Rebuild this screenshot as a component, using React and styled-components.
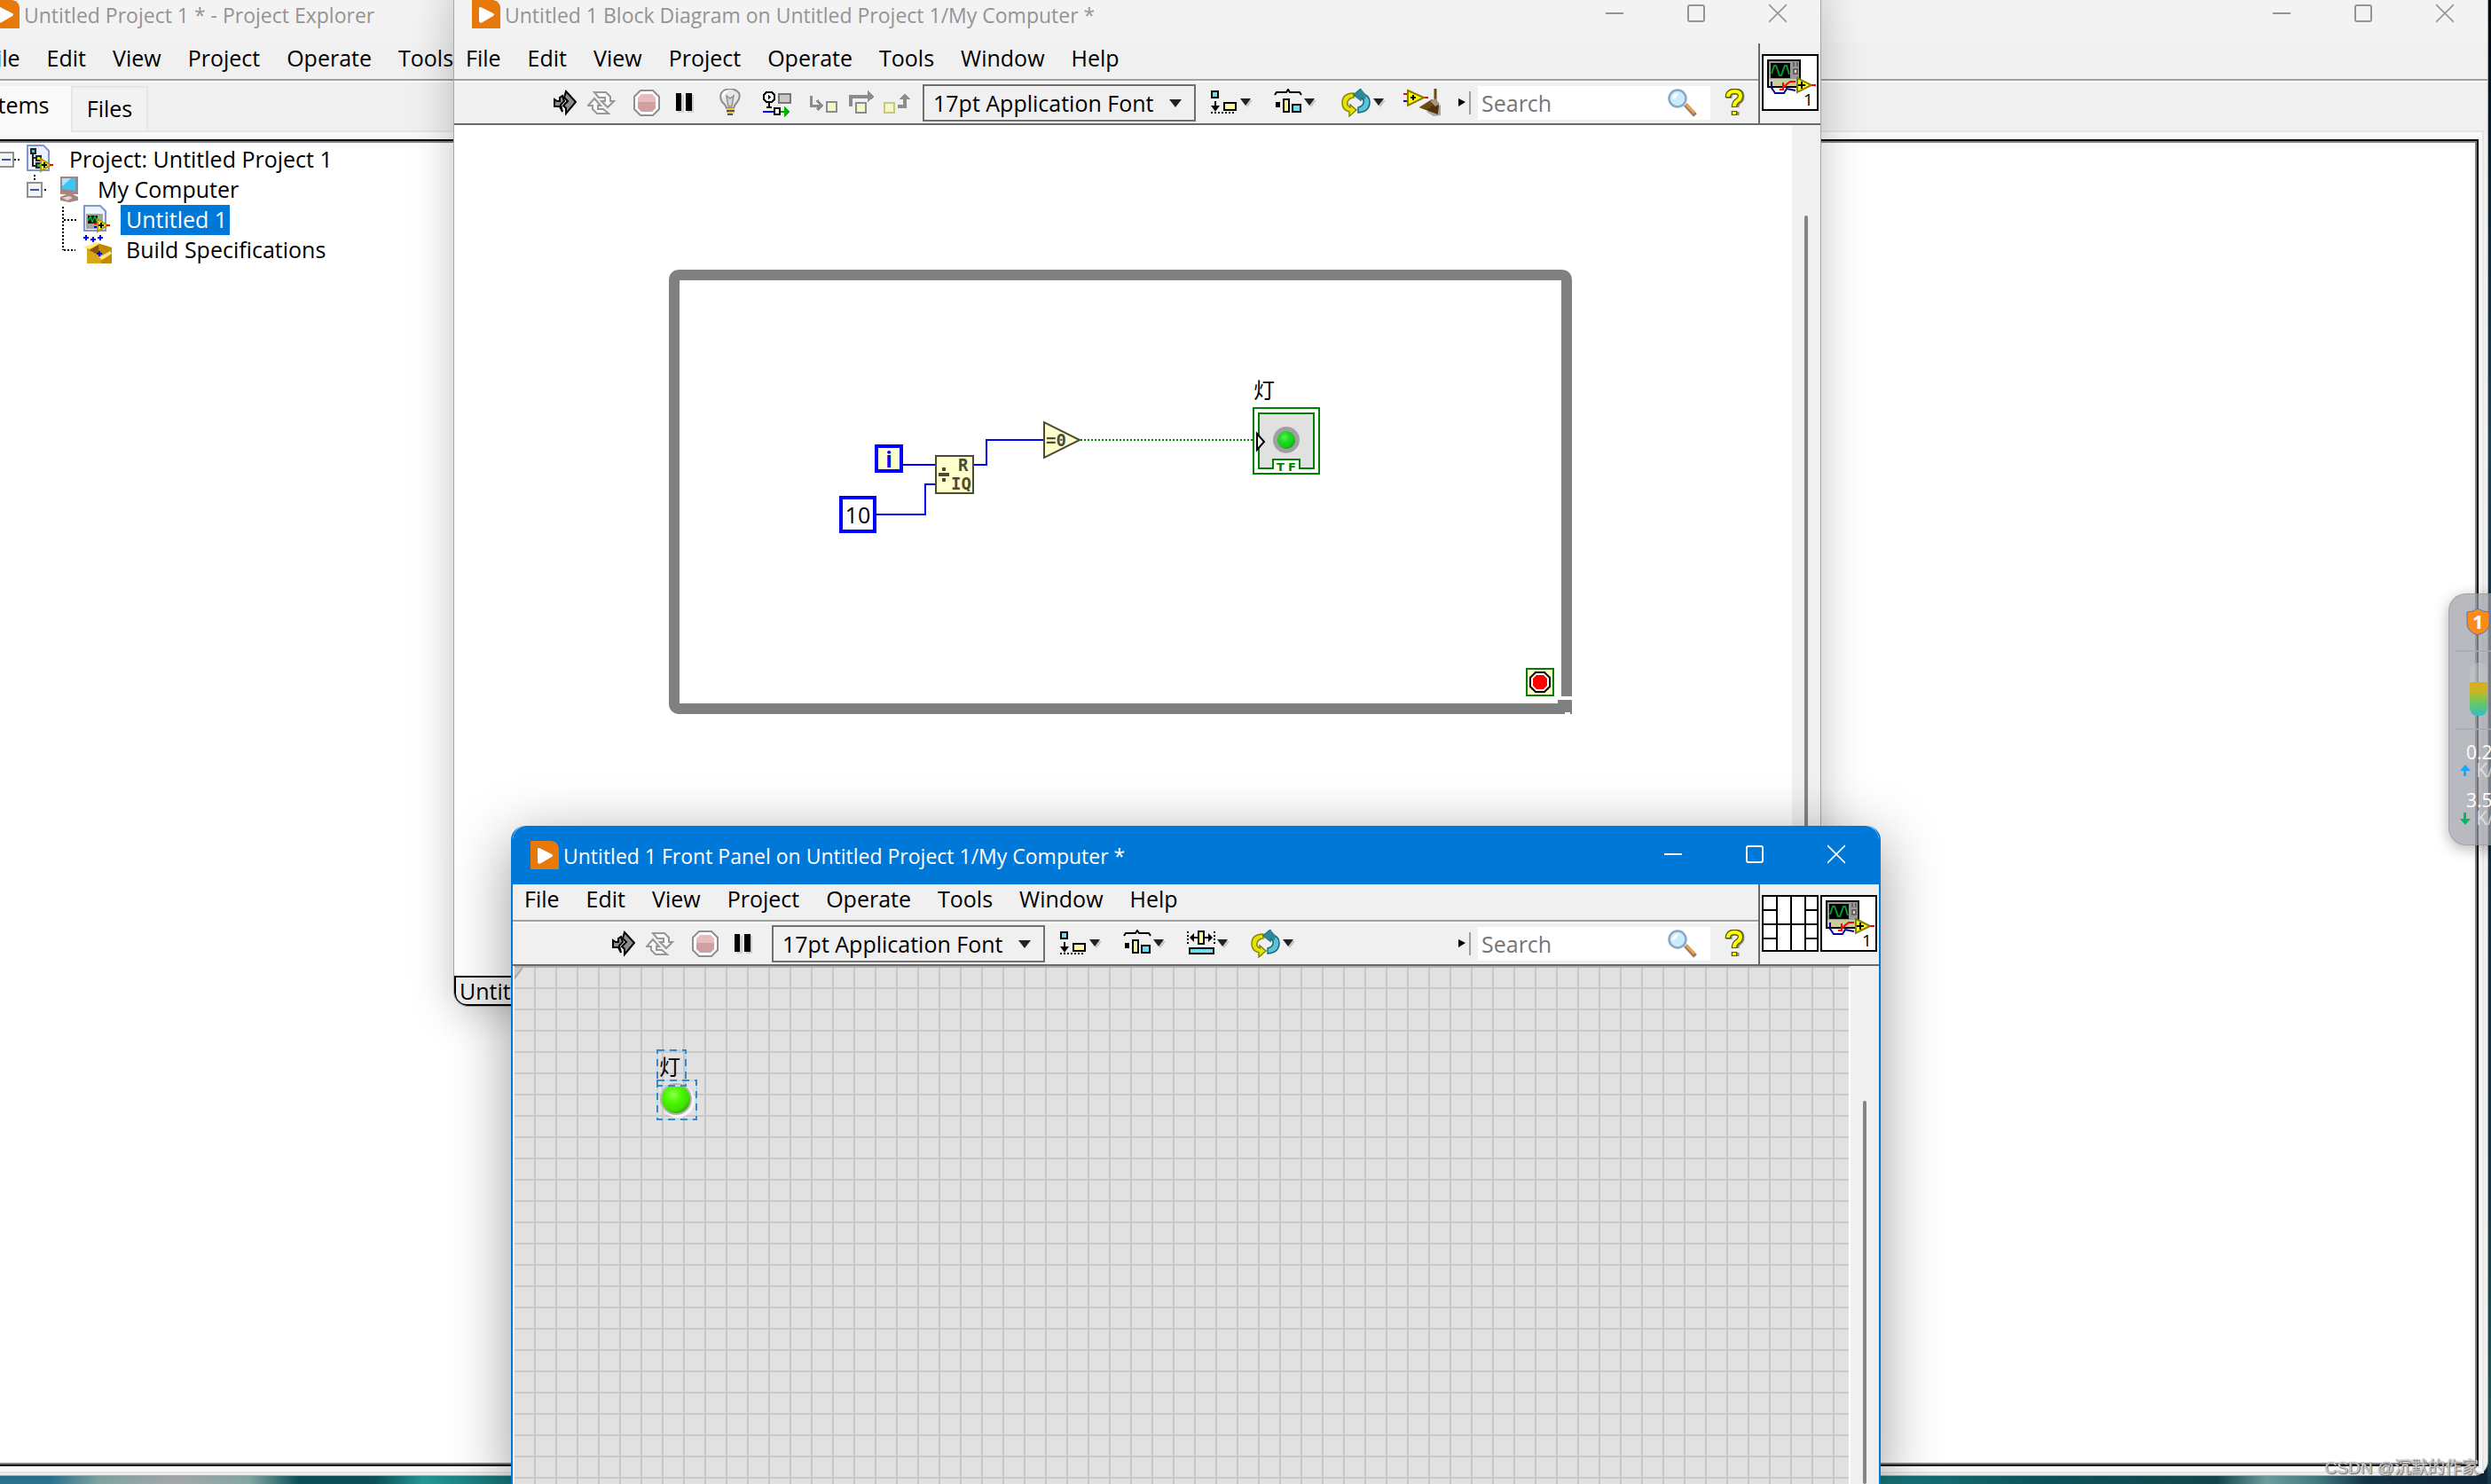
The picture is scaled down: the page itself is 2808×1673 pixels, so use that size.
import React, { useState } from "react";
import styled, { createGlobalStyle, css } from "styled-components";

const GlobalStyle = createGlobalStyle`
  * {
    box-sizing: border-box;
  }
  body {
    margin: 0;
    overflow: hidden;
    font-family: "Open Sans", "Noto Sans CJK SC", sans-serif;
    font-size: 25px;
    color: #000;
  }
  button, input, select {
    font: inherit;
    color: inherit;
  }
`;

/* ---------- desktop and windows ---------- */

const Desktop = styled.main`
  position: relative;
  height: 100vh;
  overflow: hidden;
  background:
    linear-gradient(180deg, #000914 0%, #06283c 12%, #174a66 30%, #0c3048 50%, #0f3d4f 80%, #1e6a66 97%, #16384c 100%) right / 4px 100% no-repeat,
    linear-gradient(90deg, #2f7fa0 0%, #2f7fa0 2%, #8fb8b5 4%, #b9bcc0 7%, #93bdb8 10%, #0d5a62 12%, #0d5a62 15%, #2aa8a8 17%, #1a8489 20%, #1a8489 76%, #0e5d66 82%, #164f55 89%, #7ab0b0 91%, #4a8a90 93%, #163a50 95%, #10283c 100%);
`;

const Window = styled.section`
  position: absolute;
  display: flex;
  flex-direction: column;
  background: #f0f0f0;
  border-radius: 16px;
  ${(p) =>
    p.$active
      ? css`
          border: solid #0078d7;
          border-width: 0 2px;
          border-radius: 16px 16px 0 0;
          overflow: hidden;
          box-shadow: 0 16px 68px rgba(0, 0, 0, 0.4);
        `
      : css`
          box-shadow: 0 0 0 1px #a8a8a8, 0 4px 50px rgba(0, 0, 0, 0.25);
        `}
`;

const ProjectWindow = styled(Window)`
  top: -17px;
  left: -30px;
  right: 4px;
  bottom: 10px;
`;

const DiagramWindow = styled(Window)`
  top: -17px;
  left: 512px;
  right: 756px;
  bottom: 539px;
  overflow: hidden;
`;

const PanelWindow = styled(Window)`
  top: 931px;
  left: 576px;
  right: 688px;
  bottom: 0;
`;

const TitleBar = styled.header`
  display: flex;
  align-items: center;
  flex: none;
  height: 66px;
  padding: 0 20px;
  color: ${(p) => (p.$active ? "#fff" : "#949494")};
  background: ${(p) => (p.$active ? "#0078d7" : "#f3f3f3")};
  border-radius: 16px 16px 0 0;
`;

const Title = styled.h1`
  flex: 1;
  margin: 0 0 0 5px;
  padding-top: 2px;
  font-size: 23px;
  font-weight: 400;
  line-height: 32px;
  white-space: nowrap;
`;

const WindowButtons = styled.div`
  display: flex;
  gap: 36px;
`;

const CaptionButton = styled.button`
  width: 56px;
  height: 32px;
  padding: 0;
  border: 0;
  background: none;
  svg {
    display: block;
    margin: 0 auto;
  }
`;

/* ---------- menu and tool bars ---------- */

const Bars = styled.div`
  display: flex;
  flex: none;
  border-bottom: ${(p) => (p.$plain ? "0" : "2px solid #696969")};
`;

const BarStack = styled.div`
  flex: 1;
  min-width: 0;
`;

const MenuBar = styled.nav`
  display: flex;
  gap: 30px;
  height: 44px;
  padding: 0 0 10px 13px;
  border-bottom: 2px solid #fff;
  box-shadow: inset 0 -2px 0 #a0a0a0;
`;

const MenuButton = styled.button`
  padding: 0;
  border: 0;
  background: none;
  line-height: 32px;
`;

const ToolBar = styled.div`
  display: flex;
  align-items: center;
  height: 46px;
  padding: 0 14px 0 112px;
`;

const ToolButton = styled.button`
  flex: none;
  height: 32px;
  margin: 0 0 0 ${(p) => p.$gap || 0}px;
  padding: 0;
  border: 0;
  background: none;
  svg {
    display: block;
  }
`;

const SelectWrap = styled.div`
  display: flex;
  align-items: center;
  width: 308px;
  height: 42px;
  margin-left: ${(p) => p.$gap}px;
  border: 2px solid #707070;
  svg {
    flex: none;
    margin-right: 14px;
  }
`;

const FontSelect = styled.select`
  flex: 1;
  min-width: 0;
  height: 38px;
  padding: 0 0 0 10px;
  border: 0;
  background: none;
  appearance: none;
`;

const RightTools = styled.div`
  display: flex;
  align-items: center;
  margin-left: auto;
`;

const Separator = styled.span`
  width: 2px;
  height: 26px;
  margin: 0 8px 0 4px;
  background: #a0a0a0;
`;

const SearchBox = styled.label`
  display: flex;
  align-items: center;
  width: 262px;
  height: 38px;
  padding: 0 14px 0 4px;
  background: #fff;
  input {
    flex: 1;
    min-width: 0;
    padding: 0;
    border: 0;
    outline: 0;
    background: none;
  }
  input::placeholder {
    color: #767676;
    opacity: 1;
  }
`;

const IconPane = styled.div`
  display: flex;
  gap: 2px;
  padding: 12px 2px 0 2px;
  border-left: 2px solid #696969;
`;

/* ---------- project explorer ---------- */

const TabStrip = styled.div`
  display: flex;
  align-items: flex-end;
  height: 54px;
  padding: 4px 0 0 4px;
`;

const Tab = styled.button`
  position: relative;
  border: 0;
  ${(p) =>
    p.$selected
      ? css`
          width: 106px;
          height: 52px;
          margin-bottom: -2px;
          padding: 0 8px 10px 0;
          background: #f9f9f9;
        `
      : css`
          width: 87px;
          height: 50px;
          padding: 0 0 2px;
          border: 2px solid #e5e5e5;
          border-bottom: 0;
          background: #f2f2f2;
        `}
`;

const TabPage = styled.div`
  display: flex;
  flex: 1;
  margin: 0 4px 2px;
  padding: 8px 4px 6px;
  border: 2px solid #e5e5e5;
  background: #f9f9f9;
`;

const Tree = styled.ul`
  flex: 1;
  margin: 0;
  padding: 2px 0 0;
  list-style: none;
  border: 2px solid #000;
  box-shadow: inset 0 0 0 2px #80828c;
  background: #fff;
`;

const TreeRow = styled.li`
  display: flex;
  height: 34px;
  &:first-child {
    margin-top: 2px;
  }
  > svg {
    flex: none;
  }
`;

const TreeLabel = styled.span`
  margin-left: 10px;
  padding: 0 3px 0 6px;
  line-height: 32px;
  color: ${(p) => (p.$selected ? "#fff" : "#000")};
  background: ${(p) => (p.$selected ? "#0078d7" : "none")};
`;

/* ---------- window bodies ---------- */

const Body = styled.div`
  display: flex;
  flex: 1;
  min-height: 0;
`;

const DiagramCanvas = styled.div`
  position: relative;
  flex: 1;
  overflow: hidden;
  background: #fff;
`;

const PanelCanvas = styled.div`
  position: relative;
  flex: 1;
  margin-left: 2px;
  overflow: hidden;
  border-top: 2px solid #b0b0b0;
  border-right: 2px solid #fff;
  background-color: #e1e1e1;
  background-image:
    linear-gradient(#c8c8c8 2px, transparent 2px),
    linear-gradient(90deg, #c8c8c8 2px, transparent 2px);
  background-size: 24px 24px;
  background-position: 22px 22px;
`;

const ScrollTrack = styled.div`
  flex: none;
  width: 32px;
  padding: ${(p) => p.$top}px 0 0 14px;
`;

const ScrollThumb = styled.div`
  width: 4px;
  height: 100%;
  border-radius: 2px;
  background: #858585;
`;

const StatusBar = styled.footer`
  display: flex;
  flex: none;
  height: 34px;
`;

const ContextTab = styled.span`
  padding: 0 6px 0 4px;
  line-height: 30px;
  white-space: nowrap;
  border: 2px solid #000;
  border-radius: 0 0 0 14px;
`;

/* ---------- diagram nodes ---------- */

const Wires = styled.svg`
  position: absolute;
  top: 0;
  left: 0;
`;

const Node = styled.div`
  position: absolute;
  left: ${(p) => p.$x}px;
  top: ${(p) => p.$y}px;
`;

const NumberBox = styled(Node)`
  width: ${(p) => p.$size}px;
  height: ${(p) => p.$size}px;
  line-height: ${(p) => p.$size - 8}px;
  text-align: center;
  border: 4px solid #00f;
  background: ${(p) => p.$fill || "#fff"};
  color: ${(p) => p.$ink || "#000"};
  font-weight: ${(p) => (p.$ink ? 700 : 400)};
`;

const Caption = styled(Node)`
  font-family: "Noto Sans CJK SC", sans-serif;
  font-size: 24px;
  line-height: 34px;
`;

/* ---------- traffic widget ---------- */

const SideWidget = styled.aside`
  position: absolute;
  top: 669px;
  right: -32px;
  width: 80px;
  height: 284px;
  border-radius: 20px;
  background: rgba(158, 160, 166, 0.72);
  box-shadow: 0 4px 16px rgba(0, 0, 0, 0.3), inset 0 0 0 1px rgba(140, 140, 145, 0.5);
  svg {
    display: block;
  }
`;

const Watermark = styled.div`
  position: absolute;
  right: 14px;
  bottom: 6px;
  font-family: "Liberation Sans", "Noto Sans CJK SC", sans-serif;
  font-size: 19px;
  line-height: 24px;
  color: rgba(225, 225, 225, 0.8);
  text-shadow: 1px 1px 1px #666, 0 0 1px #777;
`;

/* ---------- icons ---------- */

const AppIcon = () => (
  <svg width="32" height="32" viewBox="0 0 32 32">
    <path d="M0 0H24Q32 2 32 9V32H0Z" fill="#e6790a" />
    <path d="M8 9Q9 7 12 9L24 15Q26 16.500 24 18L12 25Q9 27 8 24Z" fill="#fff" />
  </svg>
);

const CaptionIcon = ({ kind }) => (
  <svg width="20" height="32" viewBox="0 0 20 32" fill="none" stroke="currentColor" strokeWidth="2">
    {kind === "min" && <path d="M0 15H20" />}
    {kind === "max" && <rect x="1" y="6" width="18" height="18" rx="2" />}
    {kind === "close" && <path d="M0 5L20 25M20 5L0 25" strokeWidth="1.600" />}
  </svg>
);

const RunIcon = () => (
  <svg width="26" height="32" viewBox="0 0 26 32" stroke="#000" strokeWidth="2" fill="#8c8c8c">
    <path d="M14 3L25 15L14 28V22L11 19L16 14L12 10Z" />
    <path d="M1 12L4 14H7V10L10 8L12 14L8 18L10 26L7 20H1Z" />
  </svg>
);

const RunLoopIcon = () => (
  <svg width="32" height="32" viewBox="0 0 32 32" stroke="#979797" strokeWidth="2" fill="#fafafa">
    <path d="M8 4H21L26 9V14H30L23 21L16 14H20V10H13Z" />
    <path d="M24 28H11L6 23V19H1L8 11L15 19H12V23H18Z" />
  </svg>
);

const AbortIcon = () => (
  <svg width="30" height="32" viewBox="0 0 30 32">
    <path d="M8 2H22L29 9V23L22 30H8L1 23V9Z" fill="#fff" stroke="#8f8f8f" strokeWidth="2" />
    <path d="M9 6H21L25 10V15H5V10Z" fill="#e6bcbc" />
    <path d="M5 15H25V22L21 26H9L5 22Z" fill="#d0a0a0" />
  </svg>
);

const PauseIcon = () => (
  <svg width="22" height="32" viewBox="0 0 22 32">
    <path d="M4 7H11V27H4ZM15 7H22V27H15Z" fill="#d0d0d0" />
    <path d="M2 5H8V25H2ZM13 5H20V25H13Z" fill="#000" />
  </svg>
);

const BulbIcon = () => (
  <svg width="26" height="32" viewBox="0 0 26 32">
    <path d="M9 22Q8 18 4 15Q1 10 3 5Q7 0 13 0Q19 0 23 5Q25 10 21 15Q18 18 17 22Z" fill="#e8e8e8" stroke="#8a8a8a" strokeWidth="2" />
    <path d="M9 8L11 20H15L17 8L13 11Z" fill="#d4d4d4" stroke="#909090" strokeWidth="1.500" />
    <path d="M5 9Q5 4 10 3" stroke="#fff" strokeWidth="3" fill="none" />
    <path d="M9 22H18V27L15 30H11L9 27Z" fill="#e8c84a" />
    <path d="M9 25H18M10 29H16" stroke="#555" strokeWidth="2" />
  </svg>
);

const RetainIcon = () => (
  <svg width="32" height="32" viewBox="0 0 32 32" shapeRendering="crispEdges">
    <path d="M18 6H31V16H18Z" fill="#c8c8c8" stroke="#777" strokeWidth="2" />
    <path d="M4 4H10L13 7V12L10 15H4L1 12V7Z" fill="#fff" stroke="#000" strokeWidth="2" />
    <path d="M6 7V12L9 10Z" fill="#000" />
    <path d="M7 15V22M4 21H10" stroke="#000" strokeWidth="2" />
    <path d="M0 26H12" stroke="#00f" strokeWidth="2" />
    <path d="M13 22H19V29H13Z" fill="#fff" stroke="#000" strokeWidth="2" />
    <path d="M20 26H24" stroke="#00a000" strokeWidth="2" />
    <path d="M24 20L31 26L24 32Z" fill="#00b400" />
  </svg>
);

const StepIcon = ({ kind }) => (
  <svg width="32" height="32" viewBox="0 0 32 32" shapeRendering="crispEdges">
    {kind === "into" && (
      <>
        <path d="M2 8V19H14M9 13L14 19L9 24" fill="none" stroke="#8c8c8c" strokeWidth="3" />
        <rect x="20" y="15" width="11" height="11" fill="#f6f6cc" stroke="#8c8c8c" strokeWidth="2" />
      </>
    )}
    {kind === "over" && (
      <>
        <path d="M3 20V9H24" fill="none" stroke="#8c8c8c" strokeWidth="4" />
        <path d="M22 2L30 9L22 15Z" fill="#8c8c8c" />
        <rect x="9" y="16" width="11" height="11" fill="#f6f6cc" stroke="#8c8c8c" strokeWidth="2" />
      </>
    )}
    {kind === "out" && (
      <>
        <rect x="1" y="16" width="11" height="11" fill="#f6f6cc" stroke="#c8c878" strokeWidth="2" />
        <path d="M16 20H24V9" fill="none" stroke="#8c8c8c" strokeWidth="4" />
        <path d="M18 12L24 5L30 12Z" fill="#8c8c8c" />
      </>
    )}
  </svg>
);

const Drop = ({ x }) => (
  <>
    <path d={`M${x + 2} 13H${x + 14}L${x + 8} 21Z`} fill="#c4c4c4" />
    <path d={`M${x} 11H${x + 12}L${x + 6} 19Z`} fill="#222" />
  </>
);

const AlignIcon = () => (
  <svg width="48" height="32" viewBox="0 0 48 32">
    <rect x="2" y="3" width="7" height="7" fill="#6fdcf4" stroke="#000" strokeWidth="2" />
    <rect x="16" y="16" width="13" height="8" fill="#fafa9c" stroke="#000" strokeWidth="2" />
    <path d="M6 14V22M3 20H9L6 24Z" stroke="#000" strokeWidth="2" />
    <path d="M1 27H27" stroke="#000" strokeWidth="2" strokeDasharray="2 2" />
    <Drop x={34} />
  </svg>
);

const DistributeIcon = () => (
  <svg width="48" height="32" viewBox="0 0 48 32">
    <path d="M1 7L3 4H14L16 1L18 4H29L31 7" fill="none" stroke="#000" strokeWidth="2" />
    <rect x="2" y="15" width="5" height="6" fill="#000" />
    <rect x="11" y="12" width="6" height="14" fill="#fafa9c" stroke="#000" strokeWidth="2" />
    <rect x="21" y="18" width="9" height="8" fill="#6fdcf4" stroke="#000" strokeWidth="2" />
    <Drop x={34} />
  </svg>
);

const ResizeIcon = () => (
  <svg width="48" height="32" viewBox="0 0 48 32">
    <path d="M1 2V18M31 2V18" stroke="#000" strokeWidth="2" strokeDasharray="2 2" />
    <path d="M4 9H12M20 9H28" stroke="#000" strokeWidth="2" />
    <path d="M3 9L8 4V14ZM29 9L24 4V14Z" fill="#000" />
    <rect x="13" y="2" width="6" height="14" fill="#fafa9c" stroke="#000" strokeWidth="2" />
    <rect x="3" y="21" width="27" height="6" fill="#6fdcf4" stroke="#000" strokeWidth="2" />
    <Drop x={34} />
  </svg>
);

const ReorderIcon = () => (
  <svg width="50" height="32" viewBox="0 0 50 32">
    <path d="M14 5Q1 5 1 16Q1 24 9 26V31L17 24L10 18V21Q6 19 7 15Q9 10 14 10Z" fill="#e4e400" stroke="#85850a" strokeWidth="1.500" />
    <path d="M19 27Q32 26 32 15Q32 7 22 5V0L14 7L22 13V10Q26 12 25 16Q24 20 19 21Z" fill="#5cc4d8" stroke="#17657a" strokeWidth="1.500" />
    <path d="M22 0L14 7L22 13V10L27 12L28 7Z" fill="#2f8798" />
    <Drop x={36} />
  </svg>
);

const CleanupIcon = () => (
  <svg width="44" height="32" viewBox="0 0 44 32">
    <path d="M0 6H6M22 10H28" stroke="#f00" strokeWidth="2" />
    <path d="M0 14H4" stroke="#00f" strokeWidth="2" />
    <path d="M26 26L34 31L42 30V18Z" fill="#a8a8a8" />
    <path d="M5 2L23 10L5 19Z" fill="#ff0" stroke="#8a7a00" strokeWidth="2" />
    <path d="M11 7V13M8 10H14" stroke="#000" strokeWidth="2" />
    <path d="M36 -1V13" stroke="#6b4a10" strokeWidth="3" />
    <path d="M18 21L32 12L40 18L39 29L28 25Z" fill="#4f330c" />
    <path d="M18 21L30 14L33 19L26 24Z" fill="#6e4a14" />
    <path d="M30 14L36 11L41 17L36 20Z" fill="#a8967a" />
  </svg>
);

const ExpandIcon = () => (
  <svg width="8" height="32" viewBox="0 0 8 32">
    <path d="M0 11L8 15L0 20Z" fill="#000" />
  </svg>
);

const MagnifierIcon = () => (
  <svg width="34" height="32" viewBox="0 0 34 32">
    <path d="M20 18L31 30" stroke="#9b7a66" strokeWidth="5" />
    <path d="M21 18L30 27" stroke="#f3a04e" strokeWidth="3" />
    <circle cx="11" cy="11" r="9.500" fill="#c9ecff" stroke="#8aa7c6" strokeWidth="2.500" />
    <path d="M5 12Q5 5 12 5Q10 12 5 12Z" fill="#fff" />
  </svg>
);

const HelpIcon = () => (
  <svg width="24" height="32" viewBox="0 0 24 32" fill="none">
    <path d="M5 11V8Q6 3 12 3Q19 3 19 9Q19 13 15 15Q13 17 13 21M13 26V30" stroke="#8a8a8a" strokeWidth="7" />
    <path d="M4 10V8Q5 3 11 3Q18 3 18 8Q18 12 14 14Q11 16 11 21M11 25V30" stroke="#555500" strokeWidth="6.500" />
    <path d="M4 9V8Q5 3 11 3Q18 3 18 8Q18 12 14 14Q11 16 11 20M11 26V29" stroke="#ff0" strokeWidth="4" />
  </svg>
);

const SelectArrow = () => (
  <svg width="14" height="10" viewBox="0 0 14 10">
    <path d="M0 1H14L7 10Z" fill="#222" />
  </svg>
);

const ViIcon = () => (
  <svg width="64" height="64" viewBox="0 0 64 64">
    <rect x="1" y="1" width="62" height="62" fill="#fff" stroke="#000" strokeWidth="2" />
    <rect x="7" y="7" width="36" height="30" fill="#cccc99" stroke="#000" strokeWidth="2" />
    <rect x="8" y="8" width="34" height="20" fill="#999" />
    <rect x="10" y="10" width="22" height="17" fill="#000" />
    <path d="M11 22L14 13H16L20 24H22L26 13H28L31 23" fill="none" stroke="#009a2a" strokeWidth="2" />
    <path d="M36 9V14M40 9V14M36 17H40V22H36Z" stroke="#666" strokeWidth="2" fill="#fcc" />
    <path d="M11 31V38L15 44H25L28 39L38 41" fill="none" stroke="#000099" strokeWidth="2" />
    <path d="M20 40H24V32M24 38L28 34L32 31H38" fill="none" stroke="#f00" strokeWidth="2" />
    <path d="M40 27L56 35L40 43Z" fill="#ff0" stroke="#808000" strokeWidth="2" />
    <path d="M45 31V39M41 35H49" stroke="#000" strokeWidth="2" />
    <path d="M56 35H61" stroke="#f00" strokeWidth="2" />
    <text x="47" y="58" fontFamily="Open Sans, sans-serif" fontSize="19">1</text>
  </svg>
);

const ConnectorIcon = () => (
  <svg width="64" height="64" viewBox="0 0 64 64" fill="none" stroke="#000" strokeWidth="2">
    <rect x="1" y="1" width="62" height="62" fill="#fff" />
    <path d="M17 0V64M33 0V64M49 0V64M0 33H64M0 17H17M49 17H64M0 49H17M49 49H64" />
  </svg>
);

const Expander = ({ x }) => (
  <>
    <rect x={x + 1} y="9" width="16" height="16" fill="#f4f4f4" stroke="#919191" strokeWidth="2" />
    <path d={`M${x + 4} 17H${x + 14}`} stroke="#3a5aa8" strokeWidth="2" />
  </>
);

const Guide = ({ width, children }) => (
  <svg width={width} height="34" viewBox={`0 0 ${width} 34`} shapeRendering="crispEdges">
    {children}
  </svg>
);

const dots = { stroke: "#000", strokeWidth: 2, strokeDasharray: "2 2" };

const DocShape = () => <path d="M1 1H19L25 7V29H1Z" fill="#eef2ff" stroke="#7f96cf" strokeWidth="2" />;

const NodeMark = () => (
  <>
    <path d="M16 16L27 23L16 30Z" fill="#ff0" stroke="#a89a00" strokeWidth="2" />
    <path d="M20 20V26M17 23H23" stroke="#000" strokeWidth="2" />
    <path d="M26 23H30" stroke="#f00" strokeWidth="2" />
  </>
);

const ProjectIcon = () => (
  <svg width="32" height="34" viewBox="0 0 32 34">
    <DocShape />
    <path d="M7 8V24H14M7 15H12" fill="none" stroke="#222" strokeWidth="2" />
    <rect x="5" y="5" width="5" height="5" fill="#2cf" stroke="#222" strokeWidth="2" />
    <rect x="11" y="13" width="5" height="5" fill="#ee0" stroke="#222" strokeWidth="2" />
    <rect x="11" y="21" width="5" height="5" fill="#0c3" stroke="#222" strokeWidth="2" />
    <NodeMark />
  </svg>
);

const ComputerIcon = () => (
  <svg width="32" height="34" viewBox="0 0 32 34">
    <path d="M6 2H26V22H20L26 25V29L16 31L6 29V25L13 22H6Z" fill="#a58580" />
    <path d="M8 4H23V18L8 16Z" fill="#3fc4f4" />
    <path d="M8 4H18L8 13Z" fill="#a8e6fb" />
    <path d="M8 26L16 24L20 26L14 29Z" fill="#e4d2ce" />
  </svg>
);

const ViFileIcon = () => (
  <svg width="32" height="34" viewBox="0 0 32 34">
    <DocShape />
    <rect x="3" y="10" width="19" height="17" fill="#a6a6a0" />
    <rect x="5" y="12" width="11" height="9" fill="#001a00" />
    <path d="M5 18L8 13L10 19L13 13L15 19" fill="none" stroke="#0a4" strokeWidth="1.500" />
    <path d="M12 25H17" stroke="#00f" strokeWidth="2" />
    <path d="M12 21H16" stroke="#f00" strokeWidth="2" />
    <NodeMark />
  </svg>
);

const BuildIcon = () => (
  <svg width="32" height="34" viewBox="0 0 32 34">
    <path d="M3 0V6M0 3H6M11 2V8M8 5H14M19 0V6M16 3H22" stroke="#00f" strokeWidth="2" />
    <path d="M4 14L16 9L32 14V32H4Z" fill="#c08a00" />
    <path d="M4 16L20 24V32H4Z" fill="#d8a818" />
    <path d="M7 17L17 11V20L14 21Z" fill="#85560a" />
    <path d="M0 14L14 8L18 10L7 16Z" fill="#ffe97a" />
    <path d="M18 25L30 18L32 21L21 28Z" fill="#ffe97a" />
    <path d="M18 18V24M15 21H21" stroke="#00f" strokeWidth="2" />
  </svg>
);

/* ---------- building blocks ---------- */

const MENUS = ["File", "Edit", "View", "Project", "Operate", "Tools", "Window", "Help"];

const WindowControls = () => (
  <WindowButtons>
    {["min", "max", "close"].map((kind) => (
      <CaptionButton key={kind} aria-label={kind}>
        <CaptionIcon kind={kind} />
      </CaptionButton>
    ))}
  </WindowButtons>
);

const Menu = () => (
  <MenuBar>
    {MENUS.map((item) => (
      <MenuButton key={item}>{item}</MenuButton>
    ))}
  </MenuBar>
);

const FontPicker = ({ gap }) => (
  <SelectWrap $gap={gap}>
    <FontSelect aria-label="Text settings" defaultValue="17pt Application Font">
      <option>17pt Application Font</option>
    </FontSelect>
    <SelectArrow />
  </SelectWrap>
);

const SearchTools = () => {
  const [query, setQuery] = useState("");
  return (
    <RightTools>
      <ToolButton aria-label="Expand search">
        <ExpandIcon />
      </ToolButton>
      <Separator />
      <SearchBox>
        <input aria-label="Search" placeholder="Search" value={query} onChange={(e) => setQuery(e.target.value)} />
        <MagnifierIcon />
      </SearchBox>
      <ToolButton $gap={16} aria-label="Help">
        <HelpIcon />
      </ToolButton>
    </RightTools>
  );
};

const Tools = ({ items }) =>
  items.map(([label, gap, icon]) => (
    <ToolButton key={label} $gap={gap} aria-label={label}>
      {icon}
    </ToolButton>
  ));

const runTools = [
  ["Run", 0, <RunIcon />],
  ["Run continuously", 12, <RunLoopIcon />],
  ["Abort", 20, <AbortIcon />],
  ["Pause", 16, <PauseIcon />],
];

const debugTools = [
  ["Highlight execution", 28, <BulbIcon />],
  ["Retain wire values", 24, <RetainIcon />],
  ["Step into", 20, <StepIcon kind="into" />],
  ["Step over", 12, <StepIcon kind="over" />],
  ["Step out", 8, <StepIcon kind="out" />],
];

/* ---------- windows ---------- */

const ProjectExplorer = () => (
  <ProjectWindow>
    <TitleBar>
      <AppIcon />
      <Title>Untitled Project 1 * - Project Explorer</Title>
      <WindowControls />
    </TitleBar>
    <Bars $plain>
      <BarStack>
        <Menu />
      </BarStack>
    </Bars>
    <TabStrip role="tablist">
      <Tab $selected role="tab">Items</Tab>
      <Tab role="tab">Files</Tab>
    </TabStrip>
    <TabPage>
      <Tree>
        <TreeRow>
          <Guide width={48}>
            <Expander x={16} />
            <path d="M34 17H41" {...dots} />
          </Guide>
          <ProjectIcon />
          <TreeLabel>Project: Untitled Project 1</TreeLabel>
        </TreeRow>
        <TreeRow>
          <Guide width={80}>
            <path d="M57 0V6" {...dots} />
            <Expander x={48} />
            <path d="M68 17H71" {...dots} />
          </Guide>
          <ComputerIcon />
          <TreeLabel>My Computer</TreeLabel>
        </TreeRow>
        <TreeRow>
          <Guide width={112}>
            <path d="M89 2V34M90 17H105" {...dots} />
          </Guide>
          <ViFileIcon />
          <TreeLabel $selected>Untitled 1</TreeLabel>
        </TreeRow>
        <TreeRow>
          <Guide width={112}>
            <path d="M89 0V17M90 17H103" {...dots} />
          </Guide>
          <BuildIcon />
          <TreeLabel>Build Specifications</TreeLabel>
        </TreeRow>
      </Tree>
    </TabPage>
  </ProjectWindow>
);

const Led = ({ size, cx, cy, r, bright }) => (
  <svg width={size} height={size} viewBox={`0 0 ${size} ${size}`}>
    <defs>
      <radialGradient id={`led${r}`} cx="40%" cy="35%" r="70%">
        <stop offset="0" stopColor={bright ? "#8dff50" : "#5cf25c"} />
        <stop offset="0.400" stopColor={bright ? "#4cfa00" : "#1edc1e"} />
        <stop offset="0.800" stopColor={bright ? "#40dc00" : "#16c41c"} />
        <stop offset="1" stopColor={bright ? "#2c9a0a" : "#0b8a14"} />
      </radialGradient>
    </defs>
    <circle cx={cx + 2} cy={cy + 2} r={r + 3} fill="#f6f6f6" />
    <circle cx={cx} cy={cy} r={r + (bright ? 2 : 5)} fill={bright ? "#b4b4b4" : "#a0a0a0"} />
    <circle cx={cx} cy={cy} r={r} fill={`url(#led${r})`} />
  </svg>
);

const BlockDiagram = () => (
  <DiagramWindow>
    <TitleBar>
      <AppIcon />
      <Title>Untitled 1 Block Diagram on Untitled Project 1/My Computer *</Title>
      <WindowControls />
    </TitleBar>
    <Bars>
      <BarStack>
        <Menu />
        <ToolBar>
          <Tools items={[...runTools, ...debugTools]} />
          <FontPicker gap={12} />
          <Tools
            items={[
              ["Align objects", 16, <AlignIcon />],
              ["Distribute objects", 24, <DistributeIcon />],
              ["Reorder", 28, <ReorderIcon />],
              ["Clean up diagram", 20, <CleanupIcon />],
            ]}
          />
          <SearchTools />
        </ToolBar>
      </BarStack>
      <IconPane>
        <ViIcon />
      </IconPane>
    </Bars>
    <Body>
      <DiagramCanvas>
        {/* loop frame and wires, canvas origin is the top left of the white area */}
        <Wires width="1508" height="700" viewBox="0 0 1508 700">
          <path d="M1254 644V175Q1254 169 1248 169H254Q248 169 248 175V652Q248 658 254 658H1260" fill="none" stroke="#808080" strokeWidth="12" />
          <path d="M1244 648H1260V664H1244Z" fill="#808080" />
          <path d="M1252 662H1258V664H1252Z" fill="#fff" />
          <path d="M506 383H542M476 439H531V405H542M586 383H600V355H664" fill="none" stroke="#00f" strokeWidth="2" shapeRendering="crispEdges" />
          <path d="M706 355H900" stroke="#008000" strokeWidth="2" strokeDasharray="2 2" shapeRendering="crispEdges" />
          <path d="M665 335V375L705 355Z" fill="#ffffcc" stroke="#4b4b37" strokeWidth="2" />
          <text x="667" y="362" fontFamily="DejaVu Sans Mono, monospace" fontWeight="700" fontSize="19" fill="#4b4b37">=0</text>
        </Wires>
        <NumberBox $x={474} $y={360} $size={32} $fill="#ffffcc" $ink="#00f">i</NumberBox>
        <NumberBox $x={434} $y={418} $size={42}>10</NumberBox>
        <Node $x={542} $y={372}>
          <svg width="44" height="44" viewBox="0 0 44 44" fontFamily="DejaVu Sans Mono, monospace" fontWeight="700" fontSize="19">
            <rect x="1" y="1" width="42" height="42" fill="#ffffcc" stroke="#4b4b37" strokeWidth="2" />
            <path d="M4 20H16V24H4ZM8 14H12V18H8ZM8 26H12V30H8Z" fill="#4b4b37" />
            <text x="26" y="18" fill="#4b4b37">R</text>
            <text x="18" y="39" fill="#4b4b37">IQ</text>
          </svg>
        </Node>
        <Caption $x={901} $y={281}>灯</Caption>
        <Node $x={900} $y={318}>
          <svg width="76" height="76" viewBox="0 0 76 76">
            <rect x="1" y="1" width="74" height="74" fill="#fff" stroke="#008000" strokeWidth="2" />
            <rect x="7" y="7" width="62" height="62" fill="#e1e1e1" stroke="#008000" strokeWidth="2" />
            <path d="M23 70V59H53V70" fill="#fff" stroke="#008000" strokeWidth="2" />
            <path d="M24 69H52V74H24Z" fill="#fff" />
            <g fontFamily="DejaVu Sans, sans-serif" fontWeight="700" fontSize="13" fill="#008000">
              <text x="27" y="72">T</text>
              <text x="40" y="72">F</text>
            </g>
            <path d="M5 30V48L13 39Z" fill="#fff" stroke="#000" strokeWidth="2" />
            <svg x="18" y="17" width="40" height="40">
              <Led size={40} cx={20} cy={20} r={10} />
            </svg>
          </svg>
        </Node>
        <Node $x={1208} $y={612}>
          <svg width="32" height="32" viewBox="0 0 32 32">
            <rect x="1" y="1" width="30" height="30" fill="#ffffcc" stroke="#008000" strokeWidth="2" />
            <path d="M11 5H21L27 11V21L21 27H11L5 21V11Z" fill="#fff" stroke="#000" strokeWidth="2" />
            <path d="M12 8H20L24 12V20L20 24H12L8 20V12Z" fill="#f00" />
          </svg>
        </Node>
      </DiagramCanvas>
      <ScrollTrack $top={102}>
        <ScrollThumb />
      </ScrollTrack>
    </Body>
    <StatusBar>
      <ContextTab>Untitled Project 1/My Computer</ContextTab>
    </StatusBar>
  </DiagramWindow>
);

const FrontPanel = () => (
  <PanelWindow $active>
    <TitleBar $active>
      <AppIcon />
      <Title>Untitled 1 Front Panel on Untitled Project 1/My Computer *</Title>
      <WindowControls />
    </TitleBar>
    <Bars>
      <BarStack>
        <Menu />
        <ToolBar>
          <Tools items={runTools} />
          <FontPicker gap={22} />
          <Tools
            items={[
              ["Align objects", 16, <AlignIcon />],
              ["Distribute objects", 24, <DistributeIcon />],
              ["Resize objects", 24, <ResizeIcon />],
              ["Reorder", 24, <ReorderIcon />],
            ]}
          />
          <SearchTools />
        </ToolBar>
      </BarStack>
      <IconPane>
        <ConnectorIcon />
        <ViIcon />
      </IconPane>
    </Bars>
    <Body>
      <PanelCanvas>
        <Wires width="10" height="14" viewBox="0 0 10 14">
          <path d="M0 0H10L0 14Z" fill="#c8c8c8" />
          <path d="M9 0L0 12" stroke="#aaa" strokeWidth="2" />
        </Wires>
        <Caption $x={163} $y={94}>灯</Caption>
        <Node $x={160} $y={92}>
          <svg width="48" height="82" viewBox="0 0 48 82">
            <svg x="0" y="33" width="48" height="48">
              <Led size={48} cx={22} cy={23} r={16} bright />
            </svg>
            <g fill="none" strokeWidth="2">
              <path d="M1 1H33V41H1ZM1 35H45V79H1Z" stroke="#b4dcf4" />
              <path d="M1 1H33V41H1ZM1 35H45V79H1Z" stroke="#3f87c0" strokeDasharray="8 6" />
            </g>
          </svg>
        </Node>
      </PanelCanvas>
      <ScrollTrack $top={152}>
        <ScrollThumb />
      </ScrollTrack>
    </Body>
  </PanelWindow>
);

const TrafficWidget = () => (
  <SideWidget>
    <svg width="80" height="284" viewBox="0 0 80 284">
      <defs>
        <linearGradient id="charge" x1="0" y1="0" x2="0" y2="1">
          <stop offset="0" stopColor="#e0aa1c" />
          <stop offset="0.300" stopColor="#c0b828" />
          <stop offset="0.600" stopColor="#6ac860" />
          <stop offset="1" stopColor="#35bcc4" />
        </linearGradient>
      </defs>
      <path d="M21 21Q28 21 33 17Q39 21 46 21V34Q46 43 33 47Q21 43 21 34Z" fill="#fa8c16" stroke="#5a70c0" strokeWidth="1" />
      <text x="27" y="40" fontSize="22" fontWeight="700" fill="#fff">1</text>
      <path d="M8 65H80M8 153H80" stroke="#a2adb2" strokeWidth="1.500" />
      <rect x="24" y="78" width="20" height="60" rx="10" fill="#c4c6c9" fillOpacity="0.500" />
      <path d="M24 100H44V128Q44 138 34 138Q24 138 24 128Z" fill="url(#charge)" />
      <g fontSize="21" fill="#fff">
        <text x="20" y="187">0.2</text>
        <text x="20" y="241">3.5</text>
        <text x="31" y="207" fillOpacity="0.600">K/s</text>
        <text x="31" y="261" fillOpacity="0.600">K/s</text>
      </g>
      <path d="M19 193L25 200H20V206H17V200H13Z" fill="#18a8ff" />
      <path d="M19 261L25 254H20V247H17V254H13Z" fill="#08b85a" />
    </svg>
  </SideWidget>
);

export default function App() {
  return (
    <Desktop>
      <GlobalStyle />
      <ProjectExplorer />
      <BlockDiagram />
      <FrontPanel />
      <TrafficWidget />
      <Watermark>CSDN @沉默的作家</Watermark>
    </Desktop>
  );
}
